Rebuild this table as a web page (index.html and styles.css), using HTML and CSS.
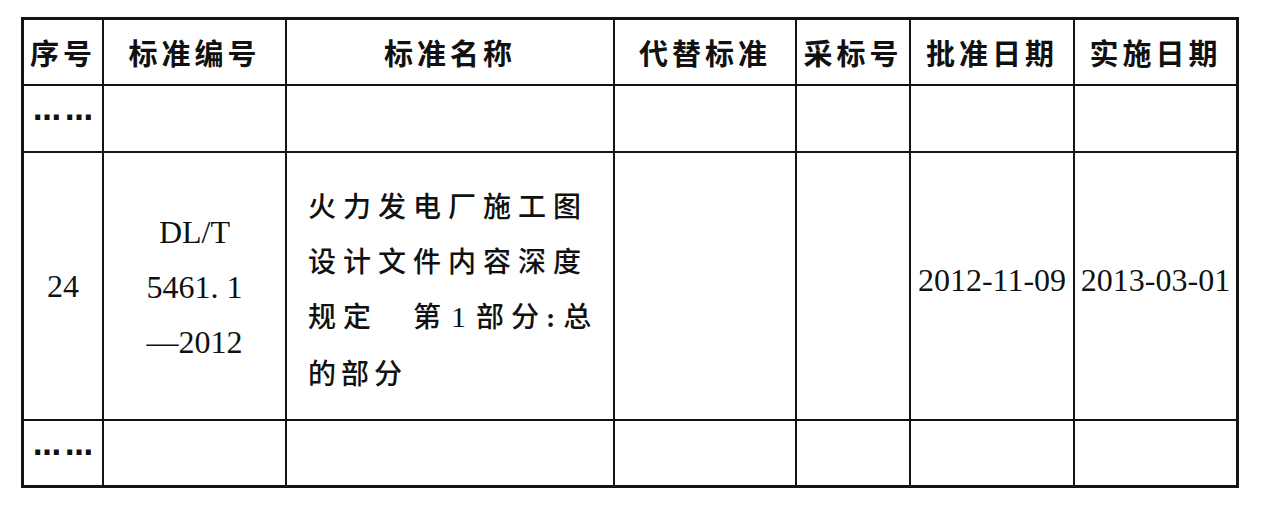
FILE: index.html
```html
<!DOCTYPE html>
<html lang="zh-CN">
<head>
<meta charset="utf-8">
<title>标准目录</title>
<link rel="stylesheet" href="styles.css">
</head>
<body>
<div class="sheet">
  <div class="grid">
    <div class="cell head">序号</div>
    <div class="cell head">标准编号</div>
    <div class="cell head">标准名称</div>
    <div class="cell head">代替标准</div>
    <div class="cell head">采标号</div>
    <div class="cell head">批准日期</div>
    <div class="cell head">实施日期</div>

    <div class="cell dots"><span class="dotline">……</span></div>
    <div class="cell"></div>
    <div class="cell"></div>
    <div class="cell"></div>
    <div class="cell"></div>
    <div class="cell"></div>
    <div class="cell"></div>

    <div class="cell num">24</div>
    <div class="cell num code"><p class="lines">DL/T<br>5461. 1<br>—2012</p></div>
    <div class="cell name"><p class="lines">火力发电厂施工图<br>设计文件内容深度<br>规定　第<span class="latin">1</span>部分<span class="colon">:</span>总<br><span class="tight">的部分</span></p></div>
    <div class="cell"></div>
    <div class="cell"></div>
    <div class="cell num date">2012-11-09</div>
    <div class="cell num date">2013-03-01</div>

    <div class="cell dots"><span class="dotline">……</span></div>
    <div class="cell"></div>
    <div class="cell"></div>
    <div class="cell"></div>
    <div class="cell"></div>
    <div class="cell"></div>
    <div class="cell"></div>
  </div>
</div>
</body>
</html>
```

FILE: styles.css
```css
html, body {
  margin: 0;
  padding: 0;
  background: #ffffff;
}

.sheet {
  padding: 17px 0 0 21px;
}

.grid {
  display: grid;
  grid-template-columns: 78px 181px 326px 180px 112px 162px 161px;
  grid-template-rows: 64px 65px 266px 64px;
  gap: 2px;
  padding: 3px;
  width: max-content;
  background: #141414;
}

.cell {
  background: #ffffff;
  display: flex;
  align-items: center;
  justify-content: center;
  text-align: center;
  color: #111111;
  font-family: "Noto Sans CJK SC", "Noto Sans", sans-serif;
  overflow: visible;
  white-space: nowrap;
}

.lines {
  margin: 0;
}

.head {
  font-size: 29px;
  font-weight: 700;
  letter-spacing: 4px;
}

.dots {
  font-family: "DejaVu Sans", sans-serif;
  font-size: 28px;
  font-weight: 700;
}

.dotline {
  display: block;
  padding: 0 0 16px 4px;
  letter-spacing: 4px;
}

.num {
  font-family: "Liberation Serif", "Times New Roman", serif;
  font-size: 32px;
  line-height: 55px;
}

.code {
  padding-top: 2px;
}

.date {
  padding-bottom: 12px;
}

.name {
  justify-content: flex-start;
  text-align: left;
  padding: 6px 0 0 21px;
  font-size: 28px;
  font-weight: 500;
  line-height: 55px;
  letter-spacing: 7px;
}

.tight {
  letter-spacing: 5px;
}

.latin {
  font-family: "Liberation Serif", "Times New Roman", serif;
  font-size: 30px;
  padding: 0 3px;
}

.colon {
  font-family: "Liberation Serif", serif;
  font-weight: 700;
  letter-spacing: 8px;
}
```
